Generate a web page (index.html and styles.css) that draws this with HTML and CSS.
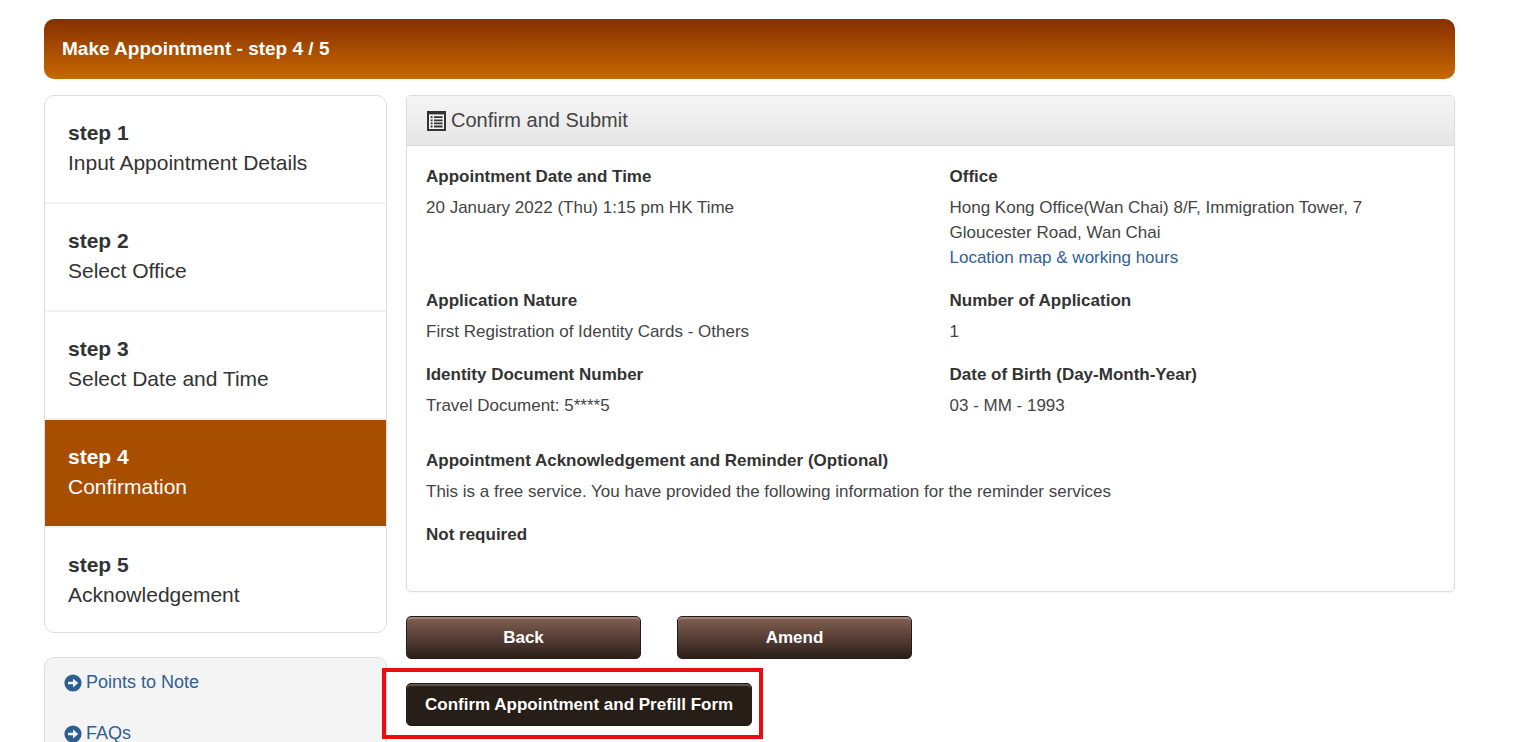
FILE: index.html
```html
<!DOCTYPE html>
<html lang="en">
<head>
<meta charset="utf-8">
<meta name="viewport" content="width=device-width, initial-scale=1">
<title>Make Appointment</title>
<link rel="stylesheet" href="styles.css">
</head>
<body>
<svg class="sprite" aria-hidden="true">
  <symbol id="arrow" viewBox="0 0 18 18">
    <circle cx="9" cy="9" r="8.6" fill="#2b5f92"/>
    <path d="M4 7.7h5V4.4L14.2 9 9 13.6v-3.3H4z" fill="#f4f4f4"/>
  </symbol>
</svg>
<div class="page">
  <header class="banner"><h1 class="banner-title">Make Appointment - step 4 / 5</h1></header>
  <div class="columns">
    <aside class="sidebar">
      <ol class="steps">
        <li class="step"><strong class="step-name">step 1</strong><span>Input Appointment Details</span></li>
        <li class="step"><strong class="step-name">step 2</strong><span>Select Office</span></li>
        <li class="step"><strong class="step-name">step 3</strong><span>Select Date and Time</span></li>
        <li class="step step-active" aria-current="step"><strong class="step-name">step 4</strong><span>Confirmation</span></li>
        <li class="step"><strong class="step-name">step 5</strong><span>Acknowledgement</span></li>
      </ol>
      <nav class="help">
        <a class="help-link" href="#"><svg class="help-icon" aria-hidden="true"><use href="#arrow"/></svg>Points to Note</a>
        <a class="help-link" href="#"><svg class="help-icon" aria-hidden="true"><use href="#arrow"/></svg>FAQs</a>
      </nav>
    </aside>
    <main class="main">
      <section class="panel">
        <h2 class="panel-head">
          <svg class="panel-icon" viewBox="0 0 19 20" aria-hidden="true">
            <path d="M1 1h17v18H1z" fill="#f5f5f5" stroke="#333" stroke-width="2"/>
            <path d="M0 0h19v3.4H0z" fill="#333"/>
            <path d="M3.6 6.2h2M3.6 9.3h2M3.6 12.4h2M3.6 15.5h2M7 6.2h8.6M7 9.3h8.6M7 12.4h8.6M7 15.5h8.6" stroke="#333" stroke-width="1.8"/>
          </svg>
          Confirm and Submit
        </h2>
        <div class="panel-body">
          <dl class="details">
            <div class="detail"><dt class="label">Appointment Date and Time</dt><dd class="value">20 January 2022 (Thu) 1:15 pm HK Time</dd></div>
            <div class="detail"><dt class="label">Office</dt><dd class="value">Hong Kong Office(Wan Chai) 8/F, Immigration Tower, 7 Gloucester Road, Wan Chai<br><a class="link" href="#">Location map &amp; working hours</a></dd></div>
            <div class="detail"><dt class="label">Application Nature</dt><dd class="value">First Registration of Identity Cards - Others</dd></div>
            <div class="detail"><dt class="label">Number of Application</dt><dd class="value">1</dd></div>
            <div class="detail"><dt class="label">Identity Document Number</dt><dd class="value">Travel Document: 5****5</dd></div>
            <div class="detail"><dt class="label">Date of Birth (Day-Month-Year)</dt><dd class="value">03 - MM - 1993</dd></div>
          </dl>
          <div class="reminder">
            <h3 class="label">Appointment Acknowledgement and Reminder (Optional)</h3>
            <p class="value">This is a free service. You have provided the following information for the reminder services</p>
            <p class="label reminder-state">Not required</p>
          </div>
        </div>
      </section>
      <div class="actions">
        <button class="button" type="button">Back</button>
        <button class="button" type="button">Amend</button>
      </div>
      <div class="confirm">
        <button class="button button-dark" type="button">Confirm Appointment and Prefill Form</button>
      </div>
    </main>
  </div>
</div>
</body>
</html>
```
FILE: styles.css
```css
* { box-sizing: border-box; }
body {
  height: 100vh;
  margin: 0;
  overflow: hidden;
  background: #fff;
  color: #333;
  font: 17px/25px "Liberation Sans", Arial, sans-serif;
}
h1, h2, h3, p, dl, dd, ol { margin: 0; padding: 0; }
a { color: #2f5f94; text-decoration: none; }
.sprite { position: absolute; width: 0; height: 0; }
.page { padding: 19px 81px 0 44px; }
.banner {
  padding: 17px 18px;
  border-radius: 10px;
  background: linear-gradient(#853000, #c86800);
  color: #fff;
}
.banner-title { font-size: 19px; line-height: 26px; }
.columns { display: flex; gap: 19px; margin-top: 16px; }
.sidebar { flex: 0 0 343px; }
.steps {
  overflow: hidden;
  border: 1px solid #ddd;
  border-radius: 10px;
  list-style: none;
}
.step {
  display: flex;
  flex-direction: column;
  padding: 22px 23px 24px;
  border-bottom: 2px solid #f2f2f2;
  font-size: 21px;
  line-height: 30px;
}
.step:last-child { padding-bottom: 22px; border-bottom: 0; }
.step-active { background: #a84e00; background-clip: padding-box; color: #fff; }
.help {
  display: flex;
  flex-direction: column;
  gap: 26px;
  margin-top: 24px;
  padding: 12px 19px;
  border: 1px solid #ddd;
  border-radius: 10px;
  background: #f4f4f4;
}
.help-link { display: flex; align-items: center; gap: 4px; font-size: 18px; }
.help-icon { width: 18px; height: 18px; }
.main { flex: 1; min-width: 0; }
.panel {
  border: 1px solid #ddd;
  border-radius: 5px;
  box-shadow: 0 1px 2px #0000000d;
}
.panel-head {
  display: flex;
  align-items: center;
  gap: 5px;
  padding: 12px 20px;
  border-bottom: 1px solid #ddd;
  border-radius: 4px 4px 0 0;
  background: linear-gradient(#f5f5f5, #e6e6e6);
  color: #444;
  font-size: 20px;
  font-weight: 400;
}
.panel-icon { width: 19px; height: 20px; }
.panel-body { padding: 18px 0 44px; }
.details { display: grid; grid-template-columns: 1fr 1fr; row-gap: 18px; }
.detail, .reminder { padding: 0 19px; }
.label { margin-bottom: 6px; font-size: 17px; font-weight: 700; }
.value { color: #444; }
.reminder { margin-top: 30px; }
.reminder-state { margin: 18px 0 0; }
.actions { display: flex; gap: 36px; margin-top: 24px; }
.button {
  min-width: 235px;
  padding: 8px 18px;
  border: 1px solid #241a16;
  border-radius: 5px;
  background: linear-gradient(#835f52, #2b1f19);
  box-shadow: inset 0 2px 1px #ffffff40;
  color: #fff;
  font: 700 17px/25px "Liberation Sans", Arial, sans-serif;
}
.button-dark { background: #281e18; }
.confirm { position: relative; width: fit-content; margin-top: 24px; }
.confirm::after {
  content: "";
  position: absolute;
  inset: -15px -11px -13px -24px;
  border: 4px solid #ec0c12;
  pointer-events: none;
}
```
